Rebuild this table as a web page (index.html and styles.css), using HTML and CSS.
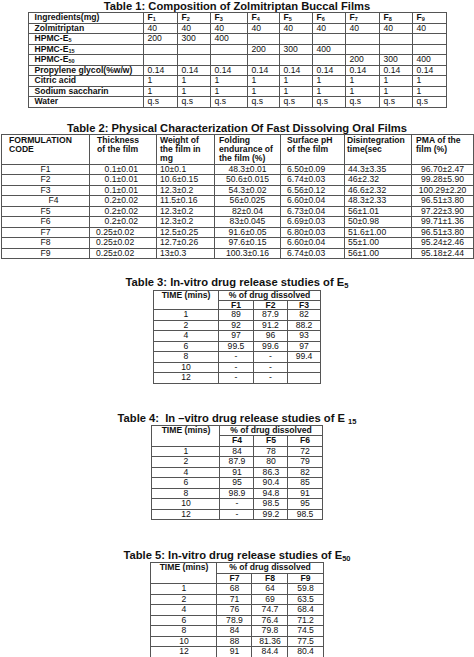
FILE: index.html
```html
<!DOCTYPE html>
<html>
<head>
<meta charset="utf-8">
<link rel="stylesheet" href="styles.css">
</head>
<body>
<div class="page">
  <h2 class="title t1">Table 1: Composition of Zolmitriptan Buccal Films</h2>
  <table class="tbl tbl1">
    <colgroup>
      <col class="c-ing"><col class="w34"><col class="w33"><col class="w37"><col class="w32"><col class="w33"><col class="w33"><col class="w34"><col class="w33"><col class="w34">
    </colgroup>
    <tr class="hd"><td>Ingredients(mg)</td><td>F<sub>1</sub></td><td>F<sub>2</sub></td><td>F<sub>3</sub></td><td>F<sub>4</sub></td><td>F<sub>5</sub></td><td>F<sub>6</sub></td><td>F<sub>7</sub></td><td>F<sub>8</sub></td><td>F<sub>9</sub></td></tr>
    <tr><th>Zolmitriptan</th><td>40</td><td>40</td><td>40</td><td>40</td><td>40</td><td>40</td><td>40</td><td>40</td><td>40</td></tr>
    <tr><th>HPMC-E<sub>5</sub></th><td>200</td><td>300</td><td>400</td><td></td><td></td><td></td><td></td><td></td><td></td></tr>
    <tr><th>HPMC-E<sub>15</sub></th><td></td><td></td><td></td><td>200</td><td>300</td><td>400</td><td></td><td></td><td></td></tr>
    <tr><th>HPMC-E<sub>50</sub></th><td></td><td></td><td></td><td></td><td></td><td></td><td>200</td><td>300</td><td>400</td></tr>
    <tr><th>Propylene glycol(%w/w)</th><td>0.14</td><td>0.14</td><td>0.14</td><td>0.14</td><td>0.14</td><td>0.14</td><td>0.14</td><td>0.14</td><td>0.14</td></tr>
    <tr><th>Citric acid</th><td>1</td><td>1</td><td>1</td><td>1</td><td>1</td><td>1</td><td>1</td><td>1</td><td>1</td></tr>
    <tr><th>Sodium saccharin</th><td>1</td><td>1</td><td>1</td><td>1</td><td>1</td><td>1</td><td>1</td><td>1</td><td>1</td></tr>
    <tr><th>Water</th><td>q.s</td><td>q.s</td><td>q.s</td><td>q.s</td><td>q.s</td><td>q.s</td><td>q.s</td><td>q.s</td><td>q.s</td></tr>
  </table>

  <h2 class="title t2">Table 2: Physical Characterization Of Fast Dissolving Oral Films</h2>
  <table class="tbl tbl2">
    <colgroup>
      <col class="w88"><col class="w67"><col class="w58"><col class="w66"><col class="w64"><col class="w67"><col class="w62">
    </colgroup>
    <tr class="hd2">
      <td class="p7">FORMULATION<br>CODE</td>
      <td class="p7">Thickness<br>of the film</td>
      <td class="p3">Weight of<br>the film in<br>mg</td>
      <td class="p4">Folding<br>endurance of<br>the film (%)</td>
      <td class="p6">Surface pH<br>of the film</td>
      <td class="p2">Disintegration<br>time(sec</td>
      <td class="p4">PMA of the<br>film (%)</td>
    </tr>
    <tr><td class="ctr">F1</td><td class="rt">0.1±0.01</td><td class="p3">10±0.1</td><td class="ctr">48.3±0.01</td><td class="p6">6.50±0.09</td><td class="p3">44.3±3.35</td><td class="ctr">96.70±2.47</td></tr>
    <tr><td class="ctr">F2</td><td class="rt">0.1±0.01</td><td class="p3">10.6±0.15</td><td class="ctr">50.6±0.015</td><td class="p6">6.74±0.03</td><td class="p3">46±2.32</td><td class="ctr">99.28±5.90</td></tr>
    <tr><td class="ctr">F3</td><td class="rt">0.1±0.01</td><td class="p3">12.3±0.2</td><td class="ctr">54.3±0.02</td><td class="p6">6.56±0.12</td><td class="p3">46.6±2.32</td><td class="ctr">100.29±2.20</td></tr>
    <tr><td class="ctr f4">F4</td><td class="rt">0.2±0.02</td><td class="p3">11.5±0.16</td><td class="ctr">56±0.025</td><td class="p6">6.60±0.04</td><td class="p3">48.3±2.33</td><td class="ctr">96.51±3.80</td></tr>
    <tr><td class="ctr">F5</td><td class="rt">0.2±0.02</td><td class="p3">12.3±0.2</td><td class="ctr">82±0.04</td><td class="p6">6.73±0.04</td><td class="p3">56±1.01</td><td class="ctr">97.22±3.90</td></tr>
    <tr><td class="ctr">F6</td><td class="rt">0.2±0.02</td><td class="p3">12.3±0.2</td><td class="ctr">83±0.045</td><td class="p6">6.69±0.03</td><td class="p3">50±0.98</td><td class="ctr">99.71±1.36</td></tr>
    <tr><td class="ctr">F7</td><td class="p6">0.25±0.02</td><td class="p3">12.5±0.25</td><td class="ctr">91.6±0.05</td><td class="p6">6.80±0.03</td><td class="p3">51.6±1.00</td><td class="ctr">96.51±3.80</td></tr>
    <tr><td class="ctr">F8</td><td class="p6">0.25±0.02</td><td class="p3">12.7±0.26</td><td class="ctr">97.6±0.15</td><td class="p6">6.60±0.04</td><td class="p3">55±1.00</td><td class="ctr">95.24±2.46</td></tr>
    <tr><td class="ctr">F9</td><td class="p6">0.25±0.02</td><td class="p3">13±0.3</td><td class="ctr">100.3±0.16</td><td class="p6">6.74±0.03</td><td class="p3">56±1.00</td><td class="ctr">95.18±2.44</td></tr>
  </table>

  <h2 class="title t3">Table 3: In-vitro drug release studies of E<sub>5</sub></h2>
  <table class="tbl rel rel3">
    <colgroup><col class="w65"><col class="w35"><col class="w34"><col class="w33"></colgroup>
    <tr class="rh"><td rowspan="2" class="time">TIME (mins)</td><td colspan="3" class="b">% of drug dissolved</td></tr>
    <tr class="rh"><td class="b">F1</td><td class="b">F2</td><td class="b">F3</td></tr>
    <tr><td>1</td><td>89</td><td>87.9</td><td>82</td></tr>
    <tr><td>2</td><td>92</td><td>91.2</td><td>88.2</td></tr>
    <tr><td>4</td><td>97</td><td>96</td><td>93</td></tr>
    <tr><td>6</td><td>99.5</td><td>99.6</td><td>97</td></tr>
    <tr><td>8</td><td>-</td><td>-</td><td>99.4</td></tr>
    <tr><td>10</td><td>-</td><td>-</td><td></td></tr>
    <tr><td>12</td><td>-</td><td>-</td><td></td></tr>
  </table>

  <h2 class="title t4">Table 4:&nbsp; In –vitro drug release studies of E <sub>15</sub></h2>
  <table class="tbl rel rel4">
    <colgroup><col class="w68"><col class="w34"><col class="w34"><col class="w34"></colgroup>
    <tr class="rh4"><td rowspan="2" class="time">TIME (mins)</td><td colspan="3" class="b">% of drug dissolved</td></tr>
    <tr class="rh4"><td class="b">F4</td><td class="b">F5</td><td class="b">F6</td></tr>
    <tr><td>1</td><td>84</td><td>78</td><td>72</td></tr>
    <tr><td>2</td><td>87.9</td><td>80</td><td>79</td></tr>
    <tr><td>4</td><td>91</td><td>86.3</td><td>82</td></tr>
    <tr><td>6</td><td>95</td><td>90.4</td><td>85</td></tr>
    <tr><td>8</td><td>98.9</td><td>94.8</td><td>91</td></tr>
    <tr><td>10</td><td>-</td><td>98.5</td><td>95</td></tr>
    <tr><td>12</td><td>-</td><td>99.2</td><td>98.5</td></tr>
  </table>

  <h2 class="title t5">Table 5: In-vitro drug release studies of E<sub>50</sub></h2>
  <table class="tbl rel rel5">
    <colgroup><col class="w66"><col class="w35"><col class="w36"><col class="w35"></colgroup>
    <tr class="rh4"><td rowspan="2" class="time">TIME (mins)</td><td colspan="3" class="b">% of drug dissolved</td></tr>
    <tr class="rh4"><td class="b">F7</td><td class="b">F8</td><td class="b">F9</td></tr>
    <tr><td>1</td><td>68</td><td>64</td><td>59.8</td></tr>
    <tr><td>2</td><td>71</td><td>69</td><td>63.5</td></tr>
    <tr><td>4</td><td>76</td><td>74.7</td><td>68.4</td></tr>
    <tr><td>6</td><td>78.9</td><td>76.4</td><td>71.2</td></tr>
    <tr><td>8</td><td>84</td><td>79.8</td><td>74.5</td></tr>
    <tr><td>10</td><td>88</td><td>81.36</td><td>77.5</td></tr>
    <tr><td>12</td><td>91</td><td>84.4</td><td>80.4</td></tr>
  </table>
</div>
</body>
</html>
```

FILE: styles.css
```css
html, body {
  margin: 0;
  padding: 0;
  background: #fff;
}
body {
  font-family: "Liberation Sans", Arial, sans-serif;
  color: #111;
  width: 474px;
  height: 657px;
  overflow: hidden;
}
.page {
  display: flex;
  flex-direction: column;
}
.title {
  margin: 0;
  font-size: 11.2px;
  line-height: 12px;
  height: 12px;
  font-weight: bold;
  text-align: center;
  color: #111;
  flex: none;
}
.title sub {
  font-size: 7.5px;
  vertical-align: -2px;
  line-height: 0;
}
.t1 { margin-top: 0; }
.t2 { margin-top: 14px; }
.t3 { margin-top: 17px; }
.t4 { margin-top: 28px; }
.t5 { margin-top: 29px; }

.tbl {
  border-collapse: collapse;
  table-layout: fixed;
  font-size: 8.6px;
  color: #111;
  flex: none;
}
.tbl tr { height: 10.5px; }
.tbl td, .tbl th {
  border: 1px solid #555;
  padding: 0 0 0 4px;
  line-height: 9px;
  white-space: nowrap;
  overflow: hidden;
  text-align: left;
  font-weight: normal;
  vertical-align: middle;
}
.tbl sub {
  font-size: 5.5px;
  vertical-align: -1px;
  line-height: 0;
}

/* table 1 */
.tbl1 { margin: 0 auto; width: 418px; }
.tbl1 .c-ing { width: 115px; }
.tbl1 th { font-weight: bold; padding-left: 6px; }
.tbl1 .hd td { font-weight: bold; }
.tbl1 .hd td:first-child { padding-left: 6px; }

.w32 { width: 32px; }
.w33 { width: 33px; }
.w34 { width: 34px; }
.w35 { width: 35px; }
.w36 { width: 36px; }
.w37 { width: 37px; }
.w58 { width: 58px; }
.w62 { width: 62px; }
.w64 { width: 64px; }
.w65 { width: 65px; }
.w66 { width: 66px; }
.w67 { width: 67px; }
.w68 { width: 68px; }
.w88 { width: 88px; }

/* table 2 */
.tbl2 { margin: 0 0 0 1px; width: 472px; }
.tbl2 tr.hd2 { height: 30px; }
.tbl2 .hd2 td {
  font-weight: bold;
  vertical-align: top;
  line-height: 9.4px;
  padding-top: 1px;
}
.tbl2 .p2 { padding-left: 2px; }
.tbl2 .p3 { padding-left: 3px; }
.tbl2 .p4 { padding-left: 4px; }
.tbl2 .p6 { padding-left: 6px; }
.tbl2 .p7 { padding-left: 7px; }
.tbl2 .ctr { text-align: center; padding: 0; }
.tbl2 .f4 { padding-left: 16px; }
.tbl2 .rt { text-align: right; padding: 0 18px 0 0; }

/* release tables */
.rel { margin-left: auto; margin-right: auto; }
.rel td { text-align: center; padding: 0; }
.rel .b { font-weight: bold; }
.rel .time { vertical-align: top; font-weight: bold; }
.rel3 { margin-top: 2px; width: 167px; }
.rel4 { margin-top: 1px; width: 170px; }
.rel5 { margin-top: 1px; width: 172px; }
.rel3 tr.rh { height: 9.5px; }
.rel3 .rh td { line-height: 8.5px; }
.rel4 tr.rh4, .rel5 tr.rh4 { height: 10.5px; }
```
